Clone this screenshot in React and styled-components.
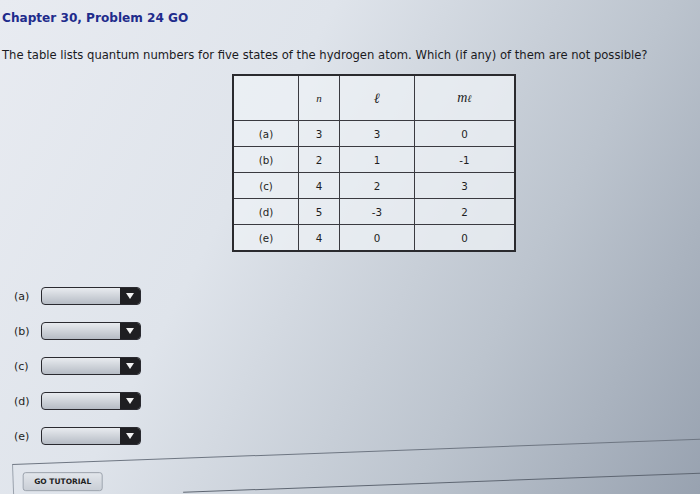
import styled, { createGlobalStyle } from "styled-components"

const Global = createGlobalStyle`
  html, body {
    margin: 0;
    padding: 0;
  }
  body {
    width: 700px;
    height: 494px;
    overflow: hidden;
    font-family: "DejaVu Sans", Verdana, sans-serif;
  }
`

const Page = styled.div`
  width: 700px;
  height: 494px;
  box-sizing: border-box;
  padding: 11px 0 0 2px;
  overflow: hidden;
  background: linear-gradient(118deg, #e8ebf1 0%, #dfe4eb 35%, #bcc4ce 70%, #98a2b0 100%);
  color: #1c1c22;
`

const Title = styled.h1`
  margin: 0;
  font-size: 12.1px;
  line-height: 14px;
  font-weight: 700;
  color: #1f2c8c;
`

const Prompt = styled.p`
  margin: 23px 0 0;
  font-size: 11.6px;
  line-height: 14px;
  color: #1a1a1e;
  white-space: nowrap;
`

const Table = styled.table`
  margin: 12px 0 0 230px;
  border-collapse: collapse;
  background: rgba(238, 241, 245, 0.75);
  border: 2px solid #2a2a2e;
`

const Cell = styled.td`
  width: ${({ w }) => w}px;
  height: ${({ head }) => (head ? 44 : 25)}px;
  padding: 0;
  border: 1.5px solid #3a3a40;
  text-align: center;
  font-size: 10.3px;
  color: #1e1e22;
`

const Sym = styled.span`
  font-family: ${({ script }) => (script ? '"DejaVu Serif", serif' : '"Liberation Serif", serif')};
  font-style: italic;
  font-weight: ${({ script }) => (script ? 700 : 400)};
  font-size: ${({ size }) => size}px;
  color: #222;
`

const Answers = styled.div`
  display: flex;
  flex-direction: column;
  row-gap: 17px;
  margin: 35px 0 0 12px;
`

const AnswerRow = styled.div`
  display: flex;
  align-items: center;
  column-gap: 9px;
`

const Label = styled.span`
  width: 18px;
  font-size: 11px;
  color: #1e1e22;
`

const Select = styled.div`
  display: flex;
  width: 100px;
  height: 18px;
  box-sizing: border-box;
  border: 1.5px solid #2a2a30;
  border-radius: 4px;
  overflow: hidden;
  background: linear-gradient(#e8ebef, #b6bcc5);
`

const SelectBody = styled.div`
  flex: 1;
`

const SelectArrow = styled.div`
  width: 20px;
  display: flex;
  justify-content: center;
  align-items: center;
  background: #1f1f22;
`

const Footer = styled.div`
  margin: 19px 0 0 10px;
  width: 720px;
  height: 60px;
  border-top: 1.5px solid #6e7682;
  border-left: 1.5px solid #9aa2ad;
  transform: rotate(-2.1deg);
  transform-origin: left top;
  padding: 9px 0 0 9px;
  box-sizing: border-box;
`

const TutorialButton = styled.button`
  display: block;
  width: 80px;
  height: 19px;
  padding: 0;
  border: 1px solid #9ba2ac;
  border-radius: 3px;
  background: linear-gradient(#e2e6eb, #c9ced6);
  font-family: "DejaVu Sans", Verdana, sans-serif;
  font-size: 7.5px;
  font-weight: 700;
  color: #222;
  transform: rotate(2.1deg);
`

const BottomLine = styled.div`
  margin: 5px 0 0 160px;
  height: 0;
  border-top: 1.5px solid #5e6672;
`

const widths = [64, 40, 74, 99]

const rows = [
  ["(a)", "3", "3", "0"],
  ["(b)", "2", "1", "-1"],
  ["(c)", "4", "2", "3"],
  ["(d)", "5", "-3", "2"],
  ["(e)", "4", "0", "0"],
]

const Arrow = () => (
  <svg width="8" height="6" viewBox="0 0 8 6">
    <path d="M0 0 H8 L4 6 Z" fill="#f2f2f2" />
  </svg>
)

const App = () => {
  return (
    <Page>
      <Global />
      <Title>Chapter 30, Problem 24 GO</Title>
      <Prompt>
        The table lists quantum numbers for five states of the hydrogen atom. Which (if any) of them are not possible?
      </Prompt>
      <Table>
        <tbody>
          <tr>
            <Cell head w={widths[0]} />
            <Cell head w={widths[1]}><Sym size={11}>n</Sym></Cell>
            <Cell head w={widths[2]}><Sym script size={14}>ℓ</Sym></Cell>
            <Cell head w={widths[3]}>
              <Sym size={14}>m</Sym><Sym script size={10}>ℓ</Sym>
            </Cell>
          </tr>
          {rows.map((r) => (
            <tr key={r[0]}>
              {r.map((v, i) => (
                <Cell key={i} w={widths[i]}>{v}</Cell>
              ))}
            </tr>
          ))}
        </tbody>
      </Table>
      <Answers>
        {rows.map((r) => (
          <AnswerRow key={r[0]}>
            <Label>{r[0]}</Label>
            <Select>
              <SelectBody />
              <SelectArrow><Arrow /></SelectArrow>
            </Select>
          </AnswerRow>
        ))}
      </Answers>
      <Footer>
        <TutorialButton>GO TUTORIAL</TutorialButton>
        <BottomLine />
      </Footer>
    </Page>
  )
}

export default App
